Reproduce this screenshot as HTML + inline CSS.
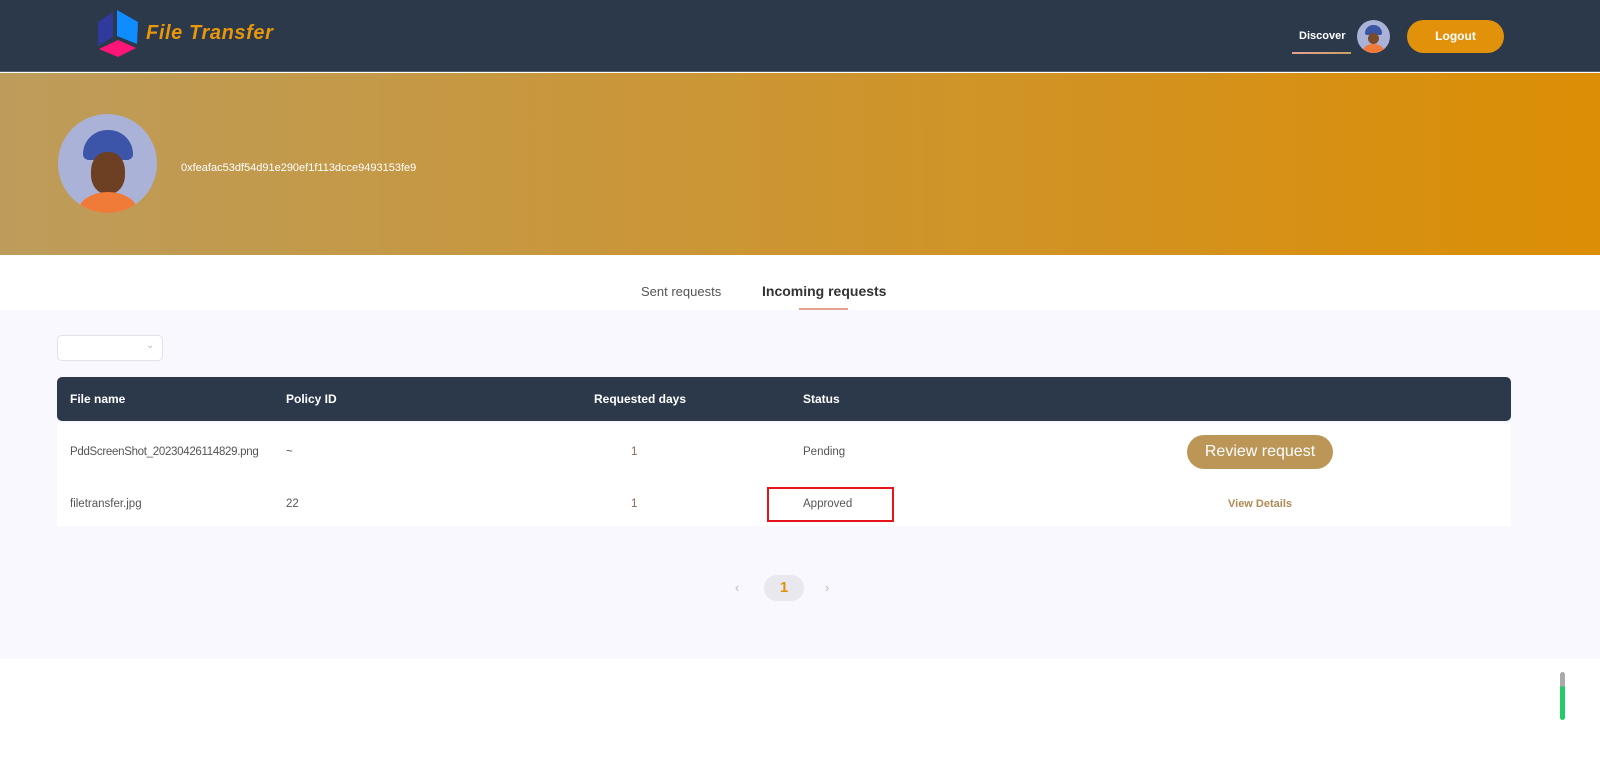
<!DOCTYPE html>
<html><head><style>
*{margin:0;padding:0;box-sizing:border-box}
body{width:1600px;height:781px;overflow:hidden;font-family:"Liberation Sans",sans-serif;background:#fff;position:relative}
.hdr{position:absolute;left:0;top:0;width:1600px;height:72px;background:#2b394b;border-bottom:1px solid #55606e}
.ban{position:absolute;left:0;top:73px;width:1600px;height:182px;background:linear-gradient(90deg,#bd9c5b,#dc8e05)}
.gray{position:absolute;left:0;top:310px;width:1600px;height:349px;background:#f8f8fe}
.abs{position:absolute}
.av{border-radius:50%;background:#aab2d8;overflow:hidden}
.th{position:absolute;top:392px;font-size:12px;font-weight:bold;color:#fff}
.td{position:absolute;font-size:11.5px;color:#555}
</style></head><body>
<div class="hdr"></div>
<svg class="abs" style="left:96px;top:8px" width="46" height="50" viewBox="0 0 46 50">
<polygon points="2,14 17,4 17,29 2,38" fill="#2f3a9c"/>
<polygon points="21,2 42,14 41,36 21,28" fill="#0f8cff"/>
<polygon points="3,41 22,32 40,40 22,49" fill="#ff1577"/>
</svg>
<div class="abs" style="left:146px;top:22px;font-size:20px;font-weight:bold;font-style:italic;color:#e8960a;letter-spacing:0.6px">File Transfer</div>
<div class="abs" style="left:1299px;top:30px;font-size:11px;font-weight:bold;color:#fff">Discover</div>
<div class="abs" style="left:1292px;top:52px;width:59px;height:2px;background:linear-gradient(90deg,#e8a090,#c9a060)"></div>
<div class="abs av" style="left:1357px;top:20px;width:33px;height:33px">
<div class="abs" style="left:8px;top:5px;width:17px;height:10px;background:#3b55a5;border-radius:9px 9px 2px 2px"></div>
<div class="abs" style="left:11px;top:13px;width:11px;height:11px;background:#7a4a2a;border-radius:50%"></div>
<div class="abs" style="left:6px;top:24px;width:21px;height:14px;background:#f07a3a;border-radius:50%"></div></div>
<div class="abs" style="left:1407px;top:20px;width:97px;height:33px;border-radius:17px;background:#e1920a;color:#fff;font-size:12px;font-weight:bold;text-align:center;line-height:33px">Logout</div>
<div class="ban"></div>
<div class="abs av" style="left:58px;top:114px;width:99px;height:99px">
<div class="abs" style="left:25px;top:16px;width:50px;height:30px;background:#3d55a8;border-radius:25px 25px 6px 6px"></div>
<div class="abs" style="left:33px;top:38px;width:34px;height:42px;background:#6d4024;border-radius:45%"></div>
<div class="abs" style="left:20px;top:78px;width:60px;height:40px;background:#f07b38;border-radius:50%"></div></div>
<div class="abs" style="left:181px;top:162px;font-size:11px;color:#fff">0xfeafac53df54d91e290ef1f113dcce9493153fe9</div>
<div class="abs" style="left:641px;top:284px;font-size:13px;color:#555">Sent requests</div>
<div class="abs" style="left:762px;top:283px;font-size:14px;font-weight:bold;color:#333">Incoming requests</div>
<div class="abs" style="left:799px;top:308px;width:49px;height:2px;background:#e8a090"></div>
<div class="gray"></div>
<div class="abs" style="left:57px;top:335px;width:106px;height:26px;background:#fff;border:1px solid #e2e2ea;border-radius:5px"><span class="abs" style="left:88px;top:4px;font-size:10px;color:#bbb">&#8964;</span></div>
<div class="abs" style="left:57px;top:377px;width:1454px;height:44px;background:#2b394b;border-radius:5px"></div>
<div class="th" style="left:70px">File name</div>
<div class="th" style="left:286px">Policy ID</div>
<div class="th" style="left:594px">Requested days</div>
<div class="th" style="left:803px">Status</div>
<div class="abs" style="left:57px;top:423px;width:1454px;height:103px;background:#fff"></div>
<div class="td" style="left:70px;top:446px;letter-spacing:-0.3px">PddScreenShot_20230426114829.png</div>
<div class="td" style="left:286px;top:446px">~</div>
<div class="td" style="left:631px;top:446px;color:#8a6a50">1</div>
<div class="td" style="left:803px;top:446px">Pending</div>
<div class="abs" style="left:1187px;top:435px;width:146px;height:34px;border-radius:17px;background:#bb9657;color:#fff;font-size:16px;text-align:center;line-height:34px">Review request</div>
<div class="td" style="left:70px;top:498px">filetransfer.jpg</div>
<div class="td" style="left:286px;top:498px">22</div>
<div class="td" style="left:631px;top:498px;color:#8a6a50">1</div>
<div class="td" style="left:803px;top:498px">Approved</div>
<div class="abs" style="left:767px;top:487px;width:127px;height:35px;border:2px solid #e8141c"></div>
<div class="td" style="left:1228px;top:498px;color:#b08a55;font-weight:bold;font-size:11px">View Details</div>
<div class="abs" style="left:735px;top:580px;font-size:13px;color:#bbb">&#8249;</div>
<div class="abs" style="left:764px;top:575px;width:40px;height:26px;border-radius:13px;background:#e8e8ee;color:#e1920a;font-weight:bold;font-size:15px;text-align:center;line-height:26px">1</div>
<div class="abs" style="left:825px;top:580px;font-size:13px;color:#bbb">&#8250;</div>
<div class="abs" style="left:1560px;top:672px;width:5px;height:48px;border-radius:3px;background:linear-gradient(#aaa 0 30%,#22cc66 30%)"></div>
</body></html>
